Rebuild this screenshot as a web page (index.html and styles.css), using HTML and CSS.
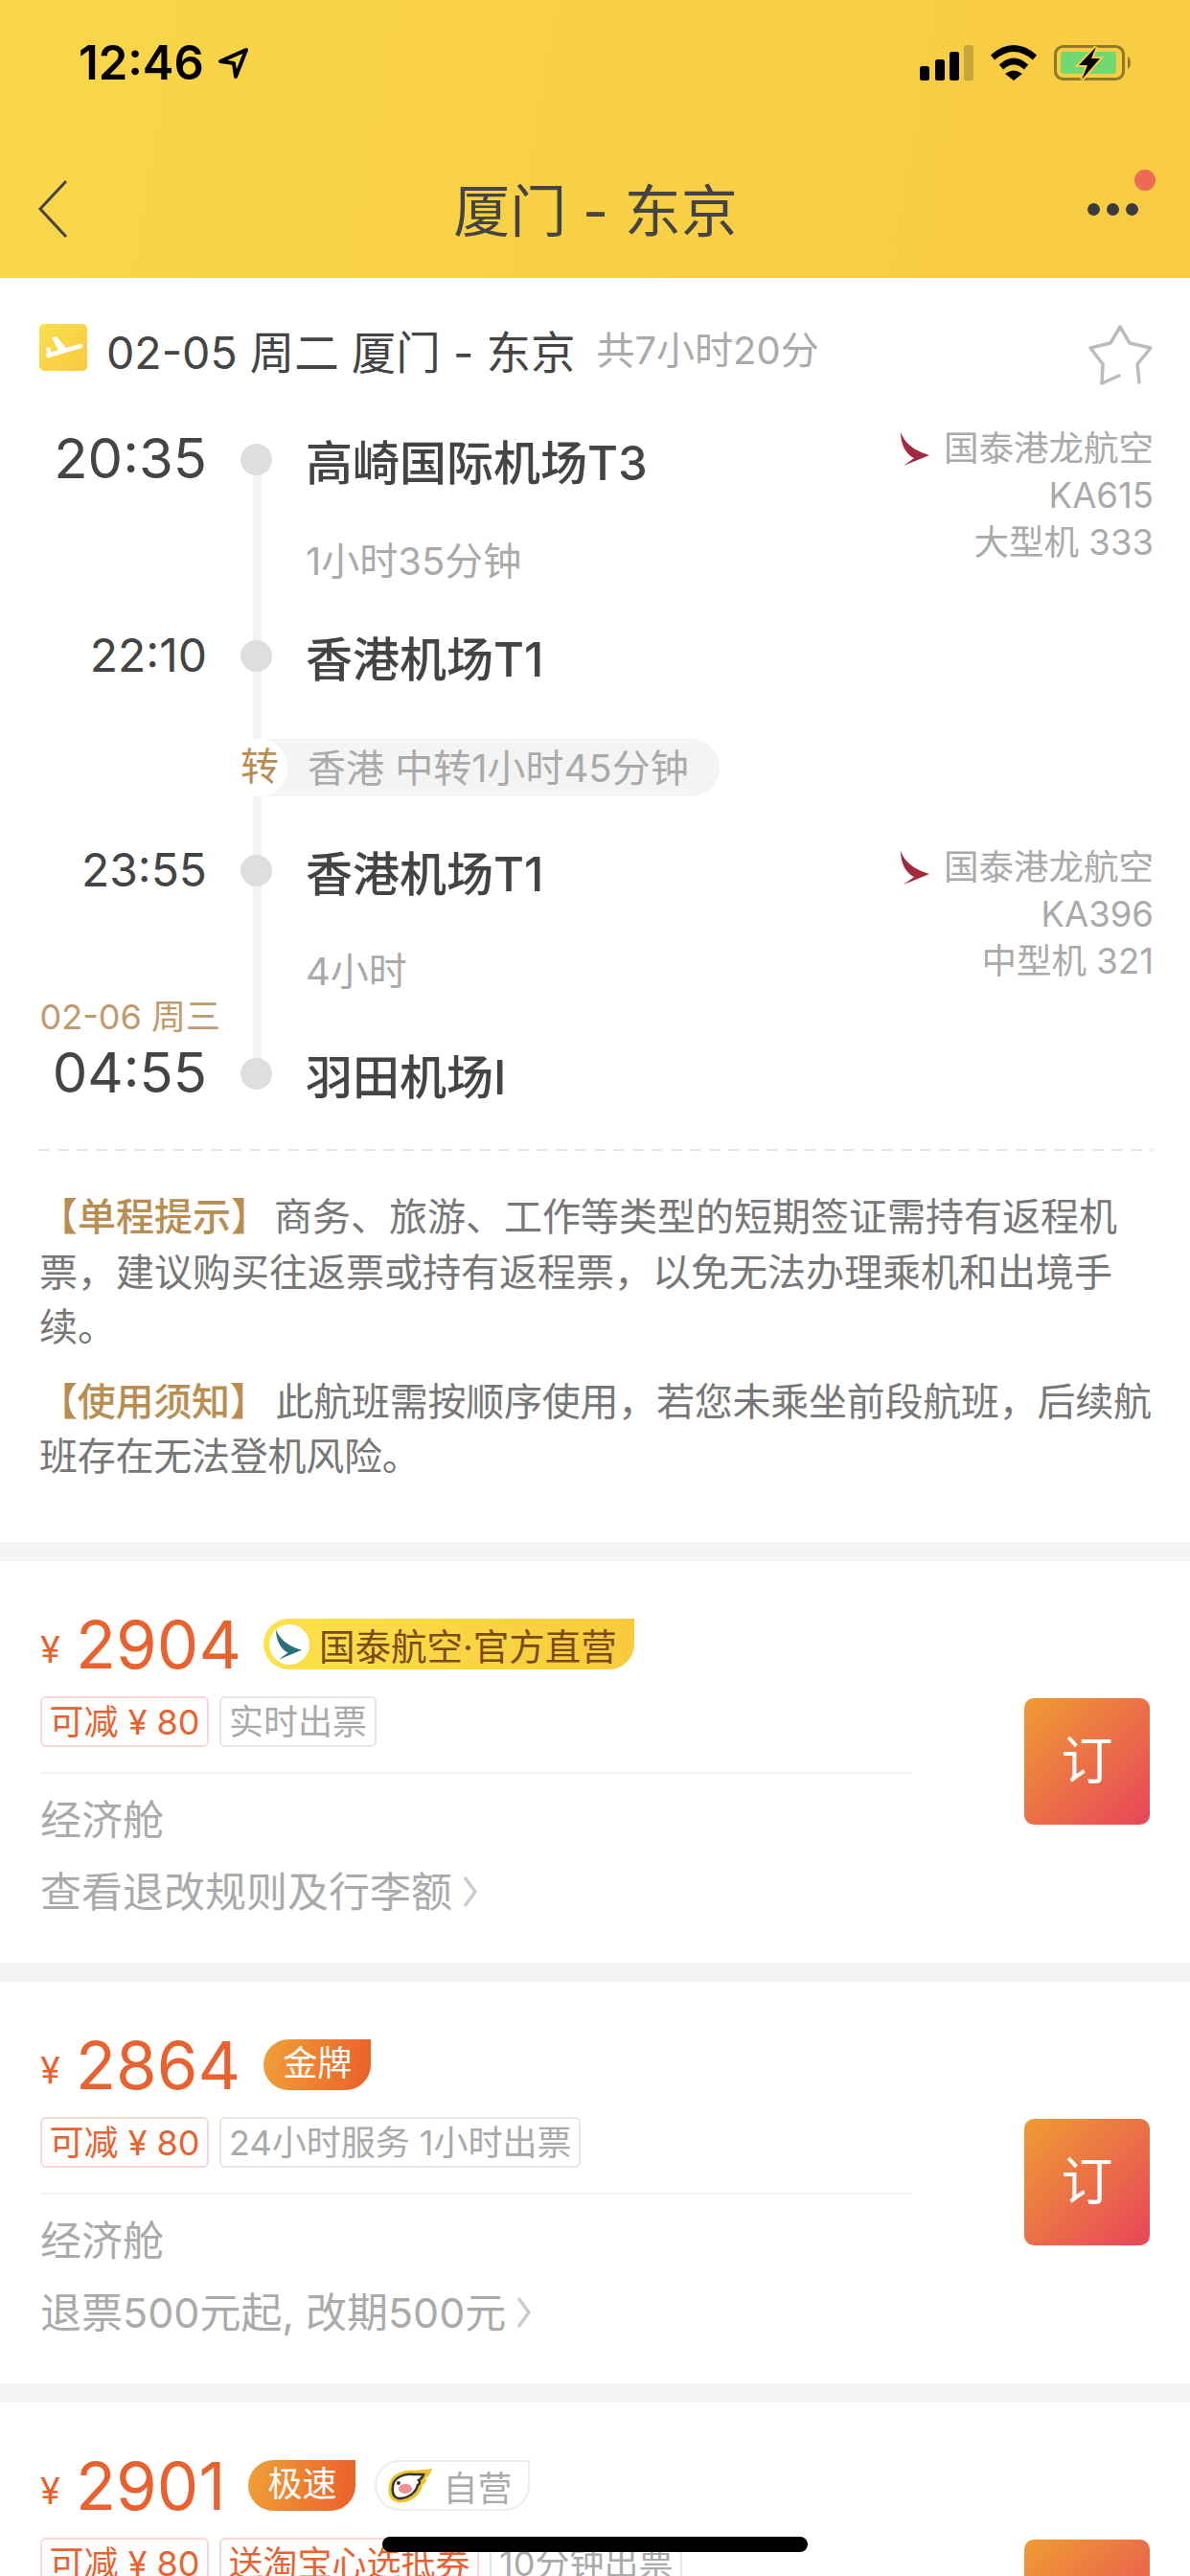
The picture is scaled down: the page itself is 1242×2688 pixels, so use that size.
FILE: index.html
```html
<!doctype html>
<html lang="zh-CN">

    <head>
        <meta charset="utf-8">
        <title>厦门 - 东京</title>
        <link rel="stylesheet" href="styles.css">
    </head>

    <body>

        <svg class="svgDefs" width="0" height="0">
            <symbol id="wing" viewBox="0 0 30 35">
                <path d="M0 0C3 8 10 18 30 24L3 35L14 27C5 23 0 12 0 0Z"/>
            </symbol>
        </svg>

        <div class="page">

            <!--HEADER-->
            <header class="header">
                <div class="status">
                    <span class="clock">12:46</span>
                    <svg class="locArrow" width="34" height="34" viewBox="0 0 34 34">
                        <path d="M30 3L3 15L17 17L19 31Z" fill="none" stroke="#000" stroke-width="4" stroke-linejoin="round"/>
                    </svg>
                    <div class="statusIcons">
                        <svg width="56" height="37" viewBox="0 0 56 37">
                            <rect x="0" y="22" width="10" height="15" rx="2.5"/>
                            <rect x="16" y="15" width="10" height="22" rx="2.5"/>
                            <rect x="31" y="7" width="10" height="30" rx="2.5"/>
                            <rect x="46" y="0" width="10" height="37" rx="2.5" fill="#c4a63a"/>
                        </svg>
                        <svg width="50" height="37" viewBox="0 0 50 37">
                            <path d="M3 13Q25 -6 47 13" fill="none" stroke="#000" stroke-width="6.5"/>
                            <path d="M12 23Q25 11 38 23" fill="none" stroke="#000" stroke-width="6.5"/>
                            <path d="M16 30Q25 23 34 30L25 37Z"/>
                        </svg>
                        <svg width="82" height="37" viewBox="0 0 82 37">
                            <rect x="1.5" y="1.5" width="71" height="34" rx="8" fill="none" stroke="#8f7a2c" stroke-width="3"/>
                            <rect x="7" y="7" width="58" height="23" rx="3" fill="#70d870"/>
                            <path d="M77 12C81 14 81 23 77 25Z" fill="#8f7a2c"/>
                            <path d="M44 2L26 21H35L29 36L48 14H39Z" stroke="#f8cd42" stroke-width="4" paint-order="stroke"/>
                        </svg>
                    </div>
                </div>
                <nav class="nav">
                    <div class="navBack">
                        <svg width="32" height="62" viewBox="0 0 32 62">
                            <path d="M30 2L3 31L30 60" fill="none" stroke="#444" stroke-width="3"/>
                        </svg>
                    </div>
                    <div class="navTitle">厦门 - 东京</div>
                    <div class="navMore">
                        <i class="moreDot"></i><i class="moreDot"></i><i class="moreDot"></i>
                        <i class="redDot"></i>
                    </div>
                </nav>
            </header>

            <!--FLIGHT SUMMARY-->
            <section class="flight">
                <div class="flightHead">
                    <div class="planeBadge">
                        <svg width="50" height="49" viewBox="0 0 50 49">
                            <path d="M9 33L43 23" stroke="#fff" stroke-width="4.5" stroke-linecap="round"/>
                            <path d="M13 14L18 13L28 25L20 28Z" fill="#fff"/>
                            <path d="M7 25L10 24L14 32L9 34Z" fill="#fff"/>
                        </svg>
                    </div>
                    <span class="flightDate">02-05 周二 厦门 - 东京</span>
                    <span class="flightTotal">共7小时20分</span>
                    <svg class="flightStar" width="70" height="66" viewBox="0 0 70 66">
                        <path d="M54 61L52 42L66 25L44 20L34 3L24 20L3 25L16 42L15 62L33 54" fill="none" stroke="#bbb" stroke-width="3.5" stroke-linejoin="round" stroke-linecap="round"/>
                    </svg>
                </div>

                <div class="route">
                    <div class="leg">
                        <div class="legStops">
                            <div class="stop">
                                <div class="stopTime stopTimeBig">20:35</div>
                                <div class="stopNode"><i class="stopDot"></i></div>
                                <div class="stopName">高崎国际机场T3</div>
                            </div>
                            <div class="legDuration">1小时35分钟</div>
                            <div class="stop stopArrive">
                                <div class="stopTime">22:10</div>
                                <div class="stopNode"><i class="stopDot"></i></div>
                                <div class="stopName">香港机场T1</div>
                            </div>
                        </div>
                        <div class="airline airlineFirst">
                            <div class="airlineName">
                                <svg class="airlineWing" width="30" height="35"><use href="#wing"/></svg>
                                国泰港龙航空
                            </div>
                            <div>KA615</div>
                            <div>大型机 333</div>
                        </div>
                    </div>

                    <div class="transfer">
                        <span class="transferMark">转</span>
                        <span class="transferText">香港 中转1小时45分钟</span>
                    </div>

                    <div class="leg">
                        <div class="legStops">
                            <div class="stop">
                                <div class="stopTime">23:55</div>
                                <div class="stopNode"><i class="stopDot"></i></div>
                                <div class="stopName">香港机场T1</div>
                            </div>
                            <div class="legDuration legDurationLast">4小时</div>
                            <div class="nextDay">02-06 周三</div>
                            <div class="stop stopLanding">
                                <div class="stopTime stopTimeBig">04:55</div>
                                <div class="stopNode"><i class="stopDot"></i></div>
                                <div class="stopName">羽田机场I</div>
                            </div>
                        </div>
                        <div class="airline">
                            <div class="airlineName">
                                <svg class="airlineWing" width="30" height="35"><use href="#wing"/></svg>
                                国泰港龙航空
                            </div>
                            <div>KA396</div>
                            <div>中型机 321</div>
                        </div>
                    </div>
                </div>

                <div class="dashLine"></div>

                <p class="note"><span class="noteLabel">【单程提示】</span>商务、旅游、工作等类型的短期签证需持有返程机票，建议购买往返票或持有返程票，以免无法办理乘机和出境手续。</p>
                <p class="note noteTight"><span class="noteLabel">【使用须知】</span>此航班需按顺序使用，若您未乘坐前段航班，后续航班存在无法登机风险。</p>
            </section>

            <!--OFFERS-->
            <section class="offer">
                <div class="offerMain">
                    <div class="priceRow">
                        <span class="priceSign">¥</span>
                        <span class="priceNum">2904</span>
                        <span class="badgeOfficial">
                            <span class="officialLogo">
                                <svg width="27" height="32" viewBox="0 0 30 35"><use href="#wing"/></svg>
                            </span>
                            国泰航空·官方直营
                        </span>
                    </div>
                    <div class="tags">
                        <span class="tag tagRed">可减 ¥ 80</span>
                        <span class="tag">实时出票</span>
                    </div>
                    <div class="offerRule"></div>
                    <div class="cabin">经济舱</div>
                    <div class="refund">查看退改规则及行李额<svg class="refundArrow" width="16" height="34" viewBox="0 0 16 34"><path d="M2 2L13 17L2 32" fill="none" stroke="#ccc" stroke-width="3.5"/></svg></div>
                </div>
                <div class="bookBtn">订</div>
            </section>

            <section class="offer">
                <div class="offerMain">
                    <div class="priceRow">
                        <span class="priceSign">¥</span>
                        <span class="priceNum">2864</span>
                        <span class="badgeOrange">金牌</span>
                    </div>
                    <div class="tags">
                        <span class="tag tagRed">可减 ¥ 80</span>
                        <span class="tag">24小时服务 1小时出票</span>
                    </div>
                    <div class="offerRule"></div>
                    <div class="cabin">经济舱</div>
                    <div class="refund">退票500元起, 改期500元<svg class="refundArrow" width="16" height="34" viewBox="0 0 16 34"><path d="M2 2L13 17L2 32" fill="none" stroke="#ccc" stroke-width="3.5"/></svg></div>
                </div>
                <div class="bookBtn">订</div>
            </section>

            <section class="offer">
                <div class="offerMain">
                    <div class="priceRow">
                        <span class="priceSign">¥</span>
                        <span class="priceNum">2901</span>
                        <span class="badgeOrange">极速</span>
                        <span class="badgeSelf">
                            <svg width="50" height="38" viewBox="0 0 50 38">
                                <path d="M4 18C6 6 20 2 30 3L49 1C47 6 46 9 42 11C44 13 42 17 39 18C37 30 24 38 13 36C5 35 2 27 4 18Z" fill="#efc229"/>
                                <path d="M8 19C9 10 20 6 29 7L40 7C39 10 37 12 35 13C37 15 36 17 34 18C32 27 22 33 14 32C9 31 7 26 8 19Z" fill="#fff" stroke="#333" stroke-width="2.5"/>
                                <circle cx="14" cy="16" r="2" fill="#333"/>
                                <ellipse cx="21" cy="22" rx="7" ry="5" fill="#f08d92"/>
                            </svg>
                            自营
                        </span>
                    </div>
                    <div class="tags">
                        <span class="tag tagRed">可减 ¥ 80</span>
                        <span class="tag tagRed">送淘宝心选抵券</span>
                        <span class="tag">10分钟出票</span>
                    </div>
                </div>
                <div class="bookBtn">订</div>
            </section>

            <div class="homeBar"></div>
        </div>

    </body>

</html>
```

FILE: styles.css
```css
* {
    box-sizing: border-box;
}

body {
    margin: 0;
    background: #fff;
    font-family: Inter, "Noto Sans CJK SC", sans-serif;
    color: #444;
}

.svgDefs {
    position: absolute;
}

.page {
    position: relative;
    width: 1242px;
    height: 2688px;
    overflow: hidden;
    background: #f4f4f4;
}

/* header */

.header {
    height: 290px;
    padding-top: 47px;
    background: linear-gradient(100deg, #f9d64a, #f8cb42);
}

.status {
    display: flex;
    align-items: center;
    height: 37px;
    padding: 0 60px 0 82px;
}

.clock {
    font-size: 49px;
    font-weight: 600;
    color: #000;
}

.locArrow {
    margin-left: 14px;
}

.statusIcons {
    display: flex;
    align-items: center;
    gap: 17px;
    margin-left: auto;
}

.nav {
    display: grid;
    grid-template-columns: 1fr auto 1fr;
    align-items: center;
    height: 90px;
    margin-top: 89px;
    padding: 0 54px 0 39px;
}

.navBack {
    display: flex;
}

.navTitle {
    margin-left: 16px;
    padding-bottom: 4px;
    font-size: 59px;
    color: #444;
}

.navMore {
    position: relative;
    display: flex;
    justify-content: flex-end;
    gap: 7px;
}

.moreDot {
    width: 13px;
    height: 13px;
    border-radius: 50%;
    background: #3c3c3c;
}

.redDot {
    position: absolute;
    top: -35px;
    right: -18px;
    width: 22px;
    height: 22px;
    border-radius: 50%;
    background: #ef6a55;
}

/* flight summary */

.flight {
    padding: 48px 38px 60px 41px;
    background: #fff;
}

.flightHead {
    display: flex;
    align-items: flex-start;
    height: 66px;
}

.planeBadge {
    width: 50px;
    height: 49px;
    border-radius: 5px;
    background: linear-gradient(135deg, #fbdf4b, #f8ca42);
}

.flightDate {
    margin-left: 20px;
    font-size: 46.5px;
    line-height: 60px;
}

.flightTotal {
    margin-left: 22px;
    font-size: 40px;
    line-height: 56px;
    color: #aaa;
}

.flightStar {
    margin-left: auto;
    margin-right: -1px;
}

.route {
    position: relative;
    margin-top: 45px;
}

.route::before {
    content: "";
    position: absolute;
    top: 30px;
    bottom: 30px;
    left: 223px;
    width: 9px;
    background: #f3f3f3;
}

.leg {
    display: flex;
    justify-content: space-between;
}

.stop {
    position: relative;
    display: flex;
    align-items: center;
    height: 60px;
}

.stopArrive {
    margin-top: 38px;
}

.stopLanding {
    margin-top: 10px;
}

.stopTime {
    width: 175px;
    padding-bottom: 2px;
    font-size: 48px;
    text-align: right;
    white-space: nowrap;
}

.stopTimeBig {
    font-size: 58px;
}

.stopNode {
    display: flex;
    justify-content: center;
    width: 103px;
}

.stopDot {
    width: 33px;
    height: 33px;
    border-radius: 50%;
    background: #dedede;
}

.stopName {
    font-size: 49px;
    font-weight: 500;
}

.legDuration {
    height: 60px;
    margin-top: 47px;
    margin-left: 278px;
    font-size: 40px;
    line-height: 60px;
    color: #aaa;
}

.legDurationLast {
    height: 50px;
    margin-top: 51px;
    line-height: 50px;
}

.nextDay {
    width: 189px;
    height: 40px;
    margin-top: 1px;
    padding-top: 1px;
    font-size: 36px;
    line-height: 40px;
    text-align: right;
    white-space: nowrap;
    color: #c19a6b;
}

.airline {
    margin-top: 3px;
    font-size: 36.5px;
    line-height: 49px;
    text-align: right;
    color: #aaa;
}

.airlineFirst {
    margin-top: -5px;
}

.airlineName {
    display: flex;
    align-items: center;
    justify-content: flex-end;
    gap: 15px;
}

.airlineWing {
    fill: #a3293f;
}

.transfer {
    position: relative;
    display: flex;
    align-items: center;
    width: 509px;
    height: 60px;
    margin-top: 57px;
    margin-bottom: 47px;
    margin-left: 201px;
    border-radius: 30px;
    background: #f4f4f4;
}

.transferMark {
    width: 58px;
    height: 60px;
    border-radius: 50%;
    background: #fff;
    font-size: 40px;
    line-height: 58px;
    text-align: center;
    color: #b98c50;
}

.transferText {
    margin-left: 21px;
    padding-bottom: 4px;
    font-size: 40px;
    color: #aaa;
}

.dashLine {
    height: 2px;
    margin-top: 49px;
    background: repeating-linear-gradient(90deg, #e6e6e6 0, #e6e6e6 10px, transparent 10px, transparent 20px);
}

.note {
    margin: 40px 0 0;
    font-size: 40px;
    line-height: 57.5px;
    color: #777;
}

.note + .note {
    margin-top: 20px;
}

.noteTight {
    letter-spacing: -0.25px;
}

.noteLabel {
    margin-right: 5px;
    font-weight: 500;
    color: #b98c50;
}

.noteTight .noteLabel {
    margin-right: 8px;
}

/* offers */

.offer {
    display: flex;
    align-items: flex-start;
    justify-content: space-between;
    margin-top: 20px;
    padding: 57px 42px 49px;
    background: #fff;
}

.offerMain {
    width: 910px;
}

.priceRow {
    display: flex;
    align-items: center;
    height: 60px;
}

.priceSign {
    width: 37px;
    padding-top: 10px;
    font-size: 38px;
    color: #e8622f;
}

.priceNum {
    font-size: 69px;
    color: #e8622f;
}

.badgeOfficial {
    display: flex;
    align-items: center;
    height: 53px;
    margin-left: 23px;
    padding: 0 18px 0 6px;
    border-radius: 27px 0 27px 27px;
    background: linear-gradient(100deg, #fde24a, #f8ca3c);
    font-size: 37.5px;
    color: #7a4b10;
}

.officialLogo {
    display: flex;
    align-items: center;
    justify-content: center;
    width: 42px;
    height: 42px;
    margin-right: 10px;
    border-radius: 50%;
    background: #fff;
    fill: #2b6f7a;
}

.badgeOrange {
    height: 53px;
    margin-left: 24px;
    padding: 0 20px;
    border-radius: 27px 0 27px 27px;
    background: linear-gradient(100deg, #f0a038, #ea5f2a);
    font-size: 36px;
    line-height: 50px;
    color: #fff;
}

.badgeSelf {
    display: flex;
    align-items: center;
    gap: 10px;
    height: 53px;
    margin-left: 20px;
    padding: 0 16px 0 9px;
    border: 2px solid #ececec;
    border-radius: 27px 0 27px 27px;
    font-size: 36px;
    color: #aaa;
}

.tags {
    display: flex;
    gap: 11px;
    margin-top: 24px;
}

.tag {
    height: 53px;
    padding: 0 8px;
    border: 2px solid #e6e6e6;
    border-radius: 6px;
    font-size: 36px;
    line-height: 50px;
    white-space: nowrap;
    color: #aaa;
}

.tagRed {
    padding: 0 7.5px;
    border-color: #f7d8d4;
    color: #e8622f;
}

.offerRule {
    height: 2px;
    margin-top: 26px;
    background: #f3f3f3;
}

.cabin {
    margin-top: 23px;
    font-size: 43px;
    line-height: 50px;
    color: #aaa;
}

.refund {
    display: flex;
    align-items: center;
    margin-top: 25px;
    font-size: 43px;
    line-height: 50px;
    color: #aaa;
}

.refundArrow {
    margin-left: 11px;
}

.bookBtn {
    width: 131px;
    height: 132px;
    margin-top: 86px;
    border-radius: 10px;
    background: linear-gradient(135deg, #ef9c33, #e8455a);
    font-size: 54px;
    line-height: 132px;
    text-align: center;
    color: #fff;
}

.homeBar {
    position: absolute;
    top: 2647px;
    left: 399px;
    width: 444px;
    height: 16px;
    border-radius: 8px;
    background: #000;
}
```
